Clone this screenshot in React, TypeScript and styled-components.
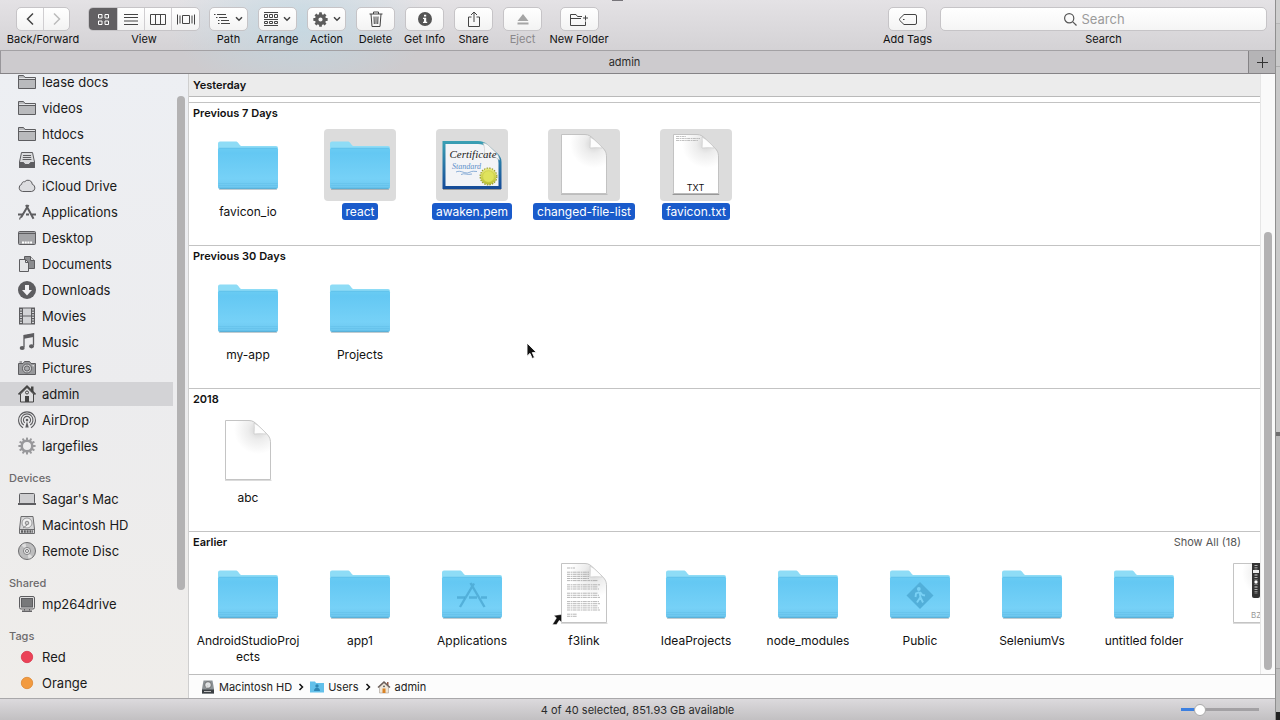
import React from "react";
import styled, { createGlobalStyle, css } from "styled-components";

const GlobalStyle = createGlobalStyle`
  * { box-sizing: border-box; }
  body {
    margin: 0;
    overflow: hidden;
    font-family: Inter, "Liberation Sans", sans-serif;
    font-size: 12px;
    color: #111;
  }
  button, input { font: inherit; color: inherit; margin: 0; }
  button { padding: 0; border: 0; background: none; }
  a { color: inherit; text-decoration: none; }
  svg { display: block; flex: none; }
`;

/* ---------- shell ---------- */

const Desktop = styled.div`
  display: flex;
  height: 100vh;
  padding-right: 4px;
  background: linear-gradient(#cfcfcf 0 23px, #b8b8b8 23px 24px, #c9c9c9 24px 66px, #adadad 66px 67px, #c9c9c9 67px 432px, #6f6f6f 432px 436px, #b9b9b9 436px 540px, #c4c4c4 540px 668px, #a5a5a5 668px 669px, #bdbdbd 669px 712px, #222 712px);
`;

const Window = styled.div`
  flex: 1;
  min-width: 0;
  display: flex;
  flex-direction: column;
  border-right: 1px solid #8f8f8f;
  background: #fff;
`;

const Chrome = styled.header`
  position: relative;
  background:
    radial-gradient(ellipse 130px 70px at 300px 24px, rgba(190, 216, 228, 0.75), rgba(190, 216, 228, 0)),
    linear-gradient(#e4e2e5, #d4d2d5 50px, #cdcbce 51px);
`;

const ProxyTail = styled.span`
  position: absolute;
  top: 0;
  left: 48%;
  width: 11px;
  height: 1px;
  background: #77757a;
`;

const Toolbar = styled.div`
  display: flex;
  height: 50px;
  padding: 7px 8px 0 7px;
`;

const Spacer = styled.div<{ $width?: number }>`
  ${(p) => (p.$width ? `flex: none; width: ${p.$width}px;` : "flex: 1;")}
`;

const Tool = styled.div<{ $width?: number }>`
  flex: none;
  width: ${(p) => p.$width ?? 49}px;
  display: flex;
  flex-direction: column;
  align-items: center;
  gap: 1px;
`;

const SearchTool = styled(Tool)`
  flex: 0 1 327px;
`;

const ToolLabel = styled.span<{ $dim?: boolean }>`
  font-size: 11px;
  line-height: 14px;
  white-space: nowrap;
  color: ${(p) => (p.$dim ? "#8a888b" : "#111")};
`;

const Segments = styled.div`
  display: flex;
  height: 24px;
  border: 1px solid #c6c4c7;
  border-radius: 5px;
  overflow: hidden;
  background: linear-gradient(#fff, #f3f3f3);
`;

const Segment = styled.button<{ $active?: boolean; $width: number }>`
  display: flex;
  align-items: center;
  justify-content: center;
  width: ${(p) => p.$width}px;
  color: ${(p) => (p.$active ? "#fff" : "#444")};
  background: ${(p) => (p.$active ? "#626063" : "none")};
  & + & { border-left: 1px solid #d0ced1; }
  &:disabled { color: #bbb; }
`;

const ToolButton = styled.button`
  display: flex;
  align-items: center;
  justify-content: center;
  gap: 5px;
  width: 39px;
  height: 24px;
  border: 1px solid #c6c4c7;
  border-radius: 5px;
  background: linear-gradient(#fff, #f3f3f3);
  color: #444;
  &:disabled { color: #a5a5a5; }
`;

const SearchBox = styled.label`
  display: flex;
  align-items: center;
  justify-content: center;
  gap: 5px;
  width: 100%;
  height: 24px;
  border: 1px solid #c6c4c7;
  border-radius: 5px;
  background: linear-gradient(#fff, #f5f5f5);
  color: #555;
`;

const SearchInput = styled.input`
  width: 62px;
  padding: 0;
  border: 0;
  outline: 0;
  background: none;
  font-size: 13px;
  &::placeholder { color: #9b9b9b; opacity: 1; }
`;

const TabBar = styled.div`
  display: flex;
  height: 24px;
  border-top: 1px solid #a3a1a4;
  border-bottom: 1px solid #858386;
`;

const Tab = styled.button`
  flex: 1;
  font-size: 11px;
  color: #2b2b2b;
  border-left: 1px solid #98969a;
`;

const NewTab = styled.button`
  display: flex;
  align-items: center;
  justify-content: center;
  width: 27px;
  border-left: 1px solid #858386;
  background: #b5b4b6;
  color: #333;
`;

const Body = styled.div`
  flex: 1;
  min-height: 0;
  display: flex;
`;

/* ---------- sidebar ---------- */

const Sidebar = styled.aside`
  flex: none;
  width: 189px;
  display: flex;
  overflow: hidden;
  border-right: 1px solid #cfcfcf;
  background: linear-gradient(#edeff3, #ececee 50%, #efedea);
`;

const Places = styled.nav`
  width: 173px;
  margin-top: -4px;
`;

const Place = styled.a<{ $active?: boolean }>`
  display: flex;
  align-items: center;
  gap: 6px;
  height: 24px;
  margin-bottom: 2px;
  padding-left: 18px;
  font-size: 13px;
  white-space: nowrap;
  color: #1a1a1a;
  ${(p) => p.$active && css`background: #d3d3d6;`}
`;

const PlaceHeading = styled.h2`
  margin: 0;
  padding: 11px 9px 2px;
  font-size: 11px;
  font-weight: 500;
  line-height: 14px;
  color: #6c6a6c;
`;

const SidebarTrack = styled.div`
  width: 15px;
  padding: 22px 3px 0 4px;
`;

const Thumb = styled.div<{ $height: number }>`
  height: ${(p) => p.$height}%;
  border-radius: 4px;
  background: #b3b2b3;
`;

/* ---------- main area ---------- */

const Main = styled.main`
  flex: 1;
  min-width: 0;
  display: flex;
  flex-direction: column;
`;

const Browser = styled.div`
  position: relative;
  flex: 1;
  min-height: 0;
  display: flex;
`;

const Groups = styled.div`
  flex: 1;
  min-width: 0;
  overflow: hidden;
`;

const MainTrack = styled.div`
  flex: none;
  width: 15px;
  padding: 158px 3px 0;
  border-left: 1px solid #e6e6e6;
  background: #fafafa;
`;

const groupTitle = css`
  margin: 0;
  font-size: 11px;
  font-weight: 600;
  line-height: 16px;
  color: #111;
`;

const StickyTitle = styled.h2`
  ${groupTitle}
  height: 23px;
  margin-bottom: 5px;
  padding: 3px 4px;
  border-bottom: 1px solid #b9b9b9;
  background: #ececec;
`;

const Group = styled.section`
  height: 143px;
  border-top: 1px solid #c3c3c3;
  overflow: hidden;
`;

const GroupHead = styled.div`
  display: flex;
  justify-content: space-between;
  padding: 2px 19px 8px 4px;
`;

const GroupTitle = styled.h2`
  ${groupTitle}
`;

const ShowAll = styled.button`
  font-size: 11px;
  line-height: 16px;
  color: #555;
`;

const Files = styled.div`
  display: flex;
  padding-left: 3px;
`;

const FileButton = styled.button`
  flex: none;
  width: 112px;
  display: flex;
  flex-direction: column;
  align-items: center;
  gap: 2px;
`;

const FileIcon = styled.span<{ $selected?: boolean }>`
  border-radius: 4px;
  background: ${(p) => (p.$selected ? "#dcdcdc" : "none")};
`;

const FileName = styled.span<{ $selected?: boolean }>`
  max-width: 112px;
  padding: 1px 4px 0;
  border-radius: 3px;
  line-height: 16px;
  word-break: break-all;
  color: ${(p) => (p.$selected ? "#fff" : "#111")};
  background: ${(p) => (p.$selected ? "#1a5bcb" : "none")};
`;

const Pointer = styled.svg`
  position: absolute;
  left: 337px;
  top: 268px;
`;

const PathBar = styled.nav`
  display: flex;
  align-items: center;
  gap: 5px;
  height: 24px;
  padding: 1px 12px 0;
  border-top: 1px solid #bdbdbd;
  background: #fcfcfc;
  font-size: 11px;
`;

const Crumb = styled.a`
  display: flex;
  align-items: center;
  gap: 4px;
  color: #222;
`;

const StatusBar = styled.footer`
  display: grid;
  grid-template-columns: 1fr auto 1fr;
  align-items: center;
  height: 22px;
  padding: 0 16px;
  border-top: 1px solid #a9a8aa;
  background: linear-gradient(#dcdadd, #c2c0c2);
  font-size: 11px;
  color: #2b2b2b;
`;

const StatusText = styled.span`
  grid-column: 2;
`;

const ZoomSlider = styled.input`
  justify-self: end;
  appearance: none;
  width: 78px;
  height: 12px;
  background: linear-gradient(90deg, #3b7fe0 25%, #a3a1a4 25%) center / 100% 3px no-repeat;
  &::-webkit-slider-thumb {
    appearance: none;
    width: 12px;
    height: 12px;
    border: 1px solid #aaa;
    border-radius: 50%;
    background: #fff;
  }
`;

/* ---------- toolbar drawings ---------- */

const Line = ({ w, h, d, sw = 1, children }: { w: number; h: number; d?: string; sw?: number; children?: React.ReactNode }) => (
  <svg width={w} height={h} viewBox={`0 0 ${w} ${h}`} fill="none" stroke="currentColor" strokeWidth={sw}>
    {d && <path d={d} />}
    {children}
  </svg>
);

const Caret = () => <Line w={8} h={6} sw={1.5} d="M1 1.2l3 3 3-3" />;

const Cog = ({ size, teeth, inner, color }: { size: number; teeth: number; inner: number; color: string }) => (
  <svg width={size} height={size} viewBox="-9 -9 18 18">
    {Array.from({ length: teeth }, (_, i) => (
      <rect key={i} x={teeth > 8 ? -1 : -1.7} y="-8.6" width={teeth > 8 ? 2 : 3.4} height="4" rx="0.5" fill={color} transform={`rotate(${(i * 360) / teeth})`} />
    ))}
    <circle r={(6.6 + inner) / 2} fill="none" stroke={color} strokeWidth={6.6 - inner} />
  </svg>
);

/* ---------- sidebar drawings ---------- */

const G = "#5d5d60";
const F = "#b9babd";

const placeArt: Record<string, React.ReactNode> = {
  folder: (
    <>
      <path d="M.5 15.500V2.500H5.500L7 4.500H17.500V15.500Z" fill={F} stroke={G} />
      <path d="M.5 6.500H17.500" stroke={G} />
      <path d="M1 5.500H17" stroke="#e4e5e8" />
    </>
  ),
  recents: (
    <>
      <path d="M3.500 1.500H14.500L16.500 11V16.500H1.500V11Z" fill="#d9dadc" stroke={G} />
      <path d="M1.500 11.500H5.500L7 13.500H11L12.500 11.500H16.500V16.500H1.500Z" fill={G} stroke={G} />
      <path d="M5 4.500H13M4.800 6.500H13.200M4.600 8.500H13.400" stroke={G} />
    </>
  ),
  cloud: <path d="M4.500 14.500a3.700 3.700 0 0 1-.8-7.200 2.500 2.500 0 0 1 3-2.600 4.300 4.300 0 0 1 7.600 2.600 3.700 3.700 0 0 1-.6 7.200Z" fill="#dcdde0" stroke={G} />,
  apps: (
    <g stroke={G} fill="none">
      <path d="M8 2L15.500 15.800M10.500 2L3 14.500" strokeWidth="2" />
      <path d="M0 11.500H5M8 11.500H11M14 11.500H18" strokeWidth="1.800" />
      <path d="M2.500 14L1.500 16.500" strokeWidth="1.200" />
    </g>
  ),
  desktop: (
    <>
      <rect x=".5" y="2.500" width="17" height="13" rx="1" fill="#a3a4a7" stroke={G} />
      <path d="M1 4.500H17" stroke={G} />
      <path d="M4 13.500H14" stroke="#fff" strokeWidth="2" strokeDasharray="2 .7" />
    </>
  ),
  documents: (
    <>
      <path d="M6.500 1.500H12.500L16.500 5.500V13.500H6.500Z" fill="#8b8c8f" stroke={G} />
      <path d="M12.500 1.500V5.500H16.500" fill="#d9dadc" stroke={G} />
      <path d="M1.500 4.500H7.500L10.500 7.500V16.500H1.500Z" fill="#e3e4e6" stroke={G} />
      <path d="M7.500 4.500V7.500H10.500" fill="none" stroke={G} />
    </>
  ),
  downloads: (
    <>
      <circle cx="9" cy="9" r="9" fill={G} />
      <path d="M7 4H11V9H14L9 14.500L4 9H7Z" fill="#f2f2f4" />
    </>
  ),
  movies: (
    <>
      <rect x="1.500" y="1" width="15" height="16" fill="#d3d4d7" stroke={G} />
      <path d="M4.500 1V17M13.500 1V17M4.500 9H13.500" stroke={G} />
      <path d="M3 1V17M15 1V17" stroke={G} strokeWidth="2" strokeDasharray="1.300 1.200" />
    </>
  ),
  music: (
    <>
      <path d="M6 14V2.500L15.500.8V12.500" fill="none" stroke={G} strokeWidth="1.300" />
      <path d="M6 2.500L15.500.8V4L6 5.700Z" fill={G} />
      <ellipse cx="4.200" cy="15" rx="2.500" ry="2.100" fill={G} />
      <ellipse cx="13.500" cy="13.300" rx="2.500" ry="2.100" fill={G} />
    </>
  ),
  pictures: (
    <>
      <path d="M.5 4.500H5L6.500 2.500H11.500L13 4.500H17.500V15.500H.5Z" fill="#98999c" stroke={G} />
      <path d="M1.500 3H4" stroke={G} />
      <circle cx="9" cy="9.500" r="4.500" fill="#d5d6d8" stroke={G} />
      <circle cx="9" cy="9.500" r="2.600" fill="#a9aaad" stroke={G} />
      <circle cx="15.200" cy="6.800" r=".8" fill="#eee" />
    </>
  ),
  home: (
    <>
      <path d="M13 1.500H15.500V7H13Z" fill="#444" />
      <path d="M2.500 9L9 2.500L15.500 9V17H2.500Z" fill="#dcdcde" stroke="#444" />
      <path d="M.5 9.500L9 1.300L17.500 9.500" fill="none" stroke="#444" strokeWidth="1.700" />
      <rect x="7" y="11" width="4" height="6" fill="#444" />
      <circle cx="9" cy="7.500" r="1.500" fill="none" stroke="#444" />
    </>
  ),
  airdrop: (
    <g fill="none" stroke={G} strokeWidth="1.100">
      <path d="M5 16.700A8.400 8.400 0 1 1 13 16.700" />
      <path d="M5.800 14A6 6 0 1 1 12.200 14" />
      <path d="M6.800 11.800A3.600 3.600 0 1 1 11.200 11.800" />
      <circle cx="9" cy="9" r="1.300" fill={G} stroke="none" />
      <path d="M9 10L7.300 16.500H10.700Z" fill={G} stroke="none" />
    </g>
  ),
  laptop: (
    <>
      <rect x="1.500" y="3.500" width="15" height="10" rx="1" fill="#cfcfd1" stroke={G} />
      <path d="M0 14H18" stroke={G} strokeWidth="2" />
    </>
  ),
  disk: (
    <>
      <path d="M3 .500H15L16.500 13V17.500H1.500V13Z" fill="#d6d6d7" stroke="#6c6c6e" />
      <circle cx="9" cy="7" r="5" fill="#f0f0f0" stroke="#99999b" />
      <circle cx="9" cy="7" r="1.800" fill="#ccc" stroke="#88888a" />
      <path d="M9 9L5 12" stroke="#88888a" />
      <path d="M1.500 13.500H16.500" stroke="#6c6c6e" />
      <path d="M3 15.500H15" stroke="#5d5d5f" strokeWidth="2.500" strokeDasharray="2 .8" />
    </>
  ),
  disc: (
    <>
      <circle cx="9" cy="9" r="8.500" fill="#bdbdbe" stroke="#6c6c6e" />
      <path d="M9 9L3.500 3.200A8 8 0 0 1 7.500 1.200ZM9 9L14.500 14.800A8 8 0 0 1 10.500 16.800Z" fill="#dedede" />
      <circle cx="9" cy="9" r="3.600" fill="#e4e4e4" stroke="#88888a" />
      <circle cx="9" cy="9" r="1.500" fill="#fff" stroke="#77777a" />
    </>
  ),
  display: (
    <>
      <rect x="1.500" y="1.500" width="15" height="12.500" rx="1.500" fill="#e1e0e0" stroke={G} />
      <rect x="3.500" y="3.500" width="11" height="8.500" fill="#77787a" stroke={G} />
      <path d="M6.500 14V15.500M11.500 14V15.500" stroke={G} />
      <path d="M4 16.200H14" stroke={G} strokeWidth="1.500" />
    </>
  ),
  red: <circle cx="9" cy="9" r="5.700" fill="#eb4257" stroke="#d9334a" strokeWidth=".8" />,
  orange: <circle cx="9" cy="9" r="5.700" fill="#f29a3f" stroke="#dd8730" strokeWidth=".8" />,
};

const PlaceIcon = ({ kind }: { kind: string }) =>
  kind === "gear" ? (
    <Cog size={18} teeth={12} inner={4} color="#98989b" />
  ) : (
    <svg width="18" height="18" viewBox="0 0 18 18">{placeArt[kind]}</svg>
  );

/* ---------- file drawings ---------- */

const HiddenSvg = styled.svg`
  position: absolute;
  width: 0;
  height: 0;
`;

const Defs = () => (
  <HiddenSvg aria-hidden="true">
    <defs>
      <linearGradient id="front" x1="0" y1="0" x2="0" y2="1">
        <stop offset="0" stopColor="#6accf3" />
        <stop offset=".12" stopColor="#64c8f3" />
        <stop offset=".75" stopColor="#76d1f7" />
        <stop offset="1" stopColor="#6cc6ee" />
      </linearGradient>
      <linearGradient id="cert" x1="0" y1="0" x2="0" y2="1">
        <stop offset="0" stopColor="#3aa0b4" />
        <stop offset="1" stopColor="#164a97" />
      </linearGradient>
      <radialGradient id="paper" gradientUnits="userSpaceOnUse" cx="46" cy="15" r="24">
        <stop offset="0" stopColor="#d2d2d2" />
        <stop offset=".4" stopColor="#ececec" />
        <stop offset="1" stopColor="#fff" />
      </radialGradient>
      <linearGradient id="seal" x1="0" y1="0" x2="0" y2="1">
        <stop offset="0" stopColor="#e8e878" />
        <stop offset="1" stopColor="#b9bf2f" />
      </linearGradient>
    </defs>
  </HiddenSvg>
);

const FolderArt = ({ badge }: { badge?: "apps" | "public" }) => (
  <svg width="72" height="72" viewBox="0 0 72 72">
    <path d="M7 60.300H65" stroke="#000" strokeOpacity=".22" strokeWidth="1" />
    <path d="M6 14.500a2 2 0 0 1 2-2H23.500c1.500 0 2.200.5 3 1.800l1.300 1.700c.6.8 1.200 1 2.300 1H64a2 2 0 0 1 2 2V57H6Z" fill="#8edcf6" />
    <path d="M6 20.500a1.500 1.500 0 0 1 1.500-1.500h57a1.500 1.500 0 0 1 1.500 1.500V58a2 2 0 0 1-2 2H8a2 2 0 0 1-2-2Z" fill="url(#front)" />
    <path d="M7 19.200H65" stroke="#5dbde7" strokeWidth=".7" />
    <path d="M6.500 54.500H65.500M6.500 56.500H65.500M6.500 58.500H65.500" stroke="#5ab7e2" strokeOpacity=".5" strokeWidth=".7" />
    <path d="M7.500 59.700H64.500" stroke="#4f9fc6" strokeWidth=".7" />
    {badge === "apps" && (
      <g stroke="#4aa5d0" strokeOpacity=".75" fill="none">
        <path d="M34.500 25L48.500 49M38 25.500L24 49" strokeWidth="2.400" />
        <path d="M21 39.500H29M33 39.500H41M45 39.500H51" strokeWidth="2.400" />
      </g>
    )}
    {badge === "public" && (
      <>
        <path d="M36 24L49.500 37.500L36 51L22.500 37.500Z" fill="#52afd9" />
        <circle cx="34.800" cy="31" r="1.900" fill="#79d1f5" />
        <path d="M35.500 34L36.500 39.500L39 44.500M36.500 39L33 44.500M35.500 34L32 35.500L31.500 39M36 34L38.500 37L41 37.500" stroke="#79d1f5" strokeWidth="1.900" fill="none" />
      </>
    )}
  </svg>
);

const PageShape = () => (
  <>
    <path d="M13 65.300H59.500" stroke="#000" strokeOpacity=".18" />
    <path d="M13.500 5.500H37C41 5.500 43 7.500 46 10.500L53 17C57 21 58.500 23 58.500 28V64.500H13.500Z" fill="url(#paper)" stroke="#bdbdbd" strokeWidth=".9" />
    <path d="M42 8C42.500 11 42.300 15 42 19C46 18.600 50 18.600 54.500 19L52 16L46 10.500Z" fill="#fdfdfd" stroke="#c4c4c4" strokeWidth=".6" />
  </>
);

const textRows = Array.from({ length: 24 }, (_, i) => i).filter((i) => ![1, 7, 11, 15, 21].includes(i));

const PageArt = ({ kind }: { kind: "blank" | "txt" | "alias" | "archive" }) => (
  <svg width="72" height="72" viewBox="0 0 72 72">
    <PageShape />
    {kind === "txt" && (
      <>
        <path d="M16 7.500H26M16 9.500H40M16 11.500H38" stroke="#999" strokeWidth=".6" strokeDasharray="3 .6 1.500 .5" />
        <path d="M12.500 65.400H59" stroke="#777" strokeWidth=".6" />
        <text x="35.500" y="62" textAnchor="middle" fontFamily="Inter, sans-serif" fontSize="9" fill="#111">TXT</text>
      </>
    )}
    {kind === "alias" && (
      <>
        {textRows.map((i) => (
          <path key={i} d={`M19 ${10 + i * 2.1}H${i < 2 ? 27 : i > 21 ? 29 : i < 6 ? 41 : 50 + (i % 3)}`} stroke="#999" strokeWidth=".7" strokeDasharray="3 .6 1.500 .5 4 .6" />
        ))}
        <path d="M6 57.500L13.500 56.500V64L11.300 62.300L8.500 66.500H4.500L8.500 60Z" fill="#111" stroke="#fff" strokeWidth=".4" />
      </>
    )}
    {kind === "archive" && (
      <>
        <path d="M32 5H40V38a2 2 0 0 1-2 2H34a2 2 0 0 1-2-2Z" fill="#333" />
        <path d="M36 7V36" stroke="#ddd" strokeWidth="3" strokeDasharray=".8 1.600" />
        <rect x="33" y="12" width="6" height="3" fill="#eee" />
        <circle cx="36" cy="24" r="2.200" fill="#fff" stroke="#333" />
        <text x="31" y="60" fontFamily="Inter, sans-serif" fontSize="8" fill="#999">BZ2</text>
      </>
    )}
  </svg>
);

const CertArt = () => (
  <svg width="72" height="72" viewBox="0 0 72 72">
    <path d="M7 60.500H65" stroke="#000" strokeOpacity=".3" />
    <path d="M6.500 12H42C46 12 49 13 52 16L61 24C64 27 65.500 29 65.500 33V60H6.500Z" fill="url(#cert)" />
    <path d="M9.500 15H42C46 15 48 16 51 18.500L58 25C61 28 62.500 30 62.500 34V57H9.500Z" fill="#f3f4f7" />
    <path d="M47 14C49 18 48.500 21 48.500 26C54 26 59 27.500 63.500 31C63 28.500 62.500 26 60 23.500L52 16C50.500 14.700 49 14 47 14Z" fill="#f6f6f6" stroke="#c5c5c5" strokeWidth=".6" />
    <text x="13.500" y="29" fontFamily="'Liberation Serif', serif" fontStyle="italic" fontSize="11" fill="#222">Certificate</text>
    <text x="16" y="40" fontFamily="'Liberation Serif', serif" fontStyle="italic" fontSize="8" fill="#5d8fc9">Standard</text>
    <path d="M20 43C25 40.500 29 45.500 33 43.500S38 42.500 41 42.500M25 45.500C29 43.500 31 46.500 36 45" stroke="#5d8fc9" strokeWidth=".7" fill="none" />
    <circle cx="52.500" cy="47.500" r="8.200" fill="none" stroke="#9a9e2c" strokeWidth="1.500" strokeDasharray="1.600 1" />
    <circle cx="52.500" cy="47.500" r="7.900" fill="url(#seal)" />
    <circle cx="52.500" cy="47.500" r="5.800" fill="#dfe35c" stroke="#c6ca48" strokeWidth=".6" />
  </svg>
);

type Art = "folder" | "folder-apps" | "folder-public" | "cert" | "blank" | "txt" | "alias" | "archive";

const FileArt = ({ art }: { art: Art }) => {
  if (art === "cert") return <CertArt />;
  if (art === "folder") return <FolderArt />;
  if (art === "folder-apps") return <FolderArt badge="apps" />;
  if (art === "folder-public") return <FolderArt badge="public" />;
  return <PageArt kind={art} />;
};

/* ---------- data ---------- */

const places: { heading?: string; items: [string, string][] }[] = [
  {
    items: [
      ["folder", "lease docs"], ["folder", "videos"], ["folder", "htdocs"], ["recents", "Recents"],
      ["cloud", "iCloud Drive"], ["apps", "Applications"], ["desktop", "Desktop"], ["documents", "Documents"],
      ["downloads", "Downloads"], ["movies", "Movies"], ["music", "Music"], ["pictures", "Pictures"],
      ["home", "admin"], ["airdrop", "AirDrop"], ["gear", "largefiles"],
    ],
  },
  { heading: "Devices", items: [["laptop", "Sagar's Mac"], ["disk", "Macintosh HD"], ["disc", "Remote Disc"]] },
  { heading: "Shared", items: [["display", "mp264drive"]] },
  { heading: "Tags", items: [["red", "Red"], ["orange", "Orange"]] },
];

type FileEntry = { name: string; art: Art; selected?: boolean };

const groups: { title: string; more?: string; files: FileEntry[] }[] = [
  {
    title: "Previous 7 Days",
    files: [
      { name: "favicon_io", art: "folder" },
      { name: "react", art: "folder", selected: true },
      { name: "awaken.pem", art: "cert", selected: true },
      { name: "changed-file-list", art: "blank", selected: true },
      { name: "favicon.txt", art: "txt", selected: true },
    ],
  },
  { title: "Previous 30 Days", files: [{ name: "my-app", art: "folder" }, { name: "Projects", art: "folder" }] },
  { title: "2018", files: [{ name: "abc", art: "blank" }] },
  {
    title: "Earlier",
    more: "Show All (18)",
    files: [
      { name: "AndroidStudioProjects", art: "folder" },
      { name: "app1", art: "folder" },
      { name: "Applications", art: "folder-apps" },
      { name: "f3link", art: "alias" },
      { name: "IdeaProjects", art: "folder" },
      { name: "node_modules", art: "folder" },
      { name: "Public", art: "folder-public" },
      { name: "SeleniumVs", art: "folder" },
      { name: "untitled folder", art: "folder" },
      { name: "", art: "archive" },
    ],
  },
];

const tools: { label: string; icon: React.ReactNode; disabled?: boolean }[] = [
  {
    label: "Path",
    icon: (
      <>
        <Line w={16} h={12} d="M3 1.500H12M5 4.500H13M7 7.500H15M7 10.500H16M0 1.500H1.500M2 4.500H3.500M4 7.500H5.500M4 10.500H5.500" />
        <Caret />
      </>
    ),
  },
  {
    label: "Arrange",
    icon: (
      <>
        <Line w={14} h={14} d="M0 .500H14M0 7.500H14M0 13.500H14M.5 2.500H3.500V5.500H.5ZM5.500 2.500H8.500V5.500H5.500ZM10.500 2.500H13.500V5.500H10.500ZM.5 9.500H3.500V11.500H.5ZM5.500 9.500H8.500V11.500H5.500ZM10.500 9.500H13.500V11.500H10.500Z" />
        <Caret />
      </>
    ),
  },
  { label: "Action", icon: <><Cog size={15} teeth={8} inner={2.5} color="#5c5c5c" /><Caret /></> },
  { label: "Delete", icon: <Line w={14} h={16} d="M.5 3H13.500M4.500 3V1H9.500V3M2 3L3 15.500H11L12 3M5 5.500L5.300 13M7 5.500V13M9 5.500L8.700 13" /> },
  {
    label: "Get Info",
    icon: (
      <svg width="14" height="14" viewBox="0 0 14 14">
        <circle cx="7" cy="7" r="7" fill="#555" />
        <path d="M6 2.800H8.200V4.600H6ZM5 5.800H8.200V9.800H9.200V11H5V9.800H6V7H5Z" fill="#fff" />
      </svg>
    ),
  },
  { label: "Share", icon: <Line w={12} h={16} d="M3.500 6H.5V15.500H11.500V6H8.500M6 11V1.500M3 4L6 1L9 4" /> },
  {
    label: "Eject",
    disabled: true,
    icon: (
      <svg width="12" height="11" viewBox="0 0 12 11" fill="currentColor"><path d="M6 0L11.500 7H.5ZM.5 8.500H11.500V10.500H.5Z" /></svg>
    ),
  },
];

const folderPlus = <Line w={18} h={13} d="M12 3.500H7.500L6 1.500H.5V12.500H15.500V8.500M.5 5.500H11M15.500 2.500V7.500M13 5H18" />;

/* ---------- view ---------- */

export default function App() {
  return (
    <Desktop>
      <GlobalStyle />
      <Defs />
      <Window>
        <Chrome>
          <ProxyTail />
          <Toolbar>
            <Tool $width={72}>
              <Segments>
                <Segment $width={26} aria-label="Back"><Line w={8} h={14} sw={1.5} d="M7 1.500L1.500 7L7 12.500" /></Segment>
                <Segment $width={26} aria-label="Forward" disabled><Line w={8} h={14} sw={1.5} d="M1 1.500L6.500 7L1 12.500" /></Segment>
              </Segments>
              <ToolLabel>Back/Forward</ToolLabel>
            </Tool>
            <Spacer $width={9} />
            <Tool $width={112}>
              <Segments>
                <Segment $width={28} $active aria-label="Icons">
                  <Line w={11} h={11} d="M.5.500H4V4H.5ZM7 .500H10.500V4H7ZM.5 7H4V10.500H.5ZM7 7H10.500V10.500H7Z" />
                </Segment>
                <Segment $width={27} aria-label="List"><Line w={14} h={11} d="M0 .500H14M0 3.500H14M0 7H14M0 10.500H14" /></Segment>
                <Segment $width={27} aria-label="Columns"><Line w={16} h={11} d="M.5.500H15.500V10.500H.5ZM5.500.500V10.500M10.500.500V10.500" /></Segment>
                <Segment $width={28} aria-label="Gallery"><Line w={18} h={11} d="M.5.500V10.500M3 1.500V9.500M5.500 1.500H12.500V9.500H5.500ZM15 1.500V9.500M17.500.500V10.500" /></Segment>
              </Segments>
              <ToolLabel>View</ToolLabel>
            </Tool>
            <Spacer $width={4} />
            {tools.map((t) => (
              <Tool key={t.label}>
                <ToolButton aria-label={t.label} disabled={t.disabled}>{t.icon}</ToolButton>
                <ToolLabel $dim={t.disabled}>{t.label}</ToolLabel>
              </Tool>
            ))}
            <Tool $width={64}>
              <ToolButton aria-label="New Folder">{folderPlus}</ToolButton>
              <ToolLabel>New Folder</ToolLabel>
            </Tool>
            <Spacer />
            <Tool>
              <ToolButton aria-label="Add Tags">
                <Line w={18} h={11} d="M5 .500H16Q17.500.500 17.500 2V9Q17.500 10.500 16 10.500H5L.8 6.500Q0 5.500.8 4.500ZM4 5.500H5.500" />
              </ToolButton>
              <ToolLabel>Add Tags</ToolLabel>
            </Tool>
            <Spacer $width={8} />
            <SearchTool>
              <SearchBox>
                <Line w={13} h={13} sw={1.2} d="M8.800 8.800L12.500 12.500"><circle cx="5.200" cy="5.200" r="4.600" /></Line>
                <SearchInput type="text" placeholder="Search" aria-label="Search" />
              </SearchBox>
              <ToolLabel>Search</ToolLabel>
            </SearchTool>
          </Toolbar>
          <TabBar>
            <Tab>admin</Tab>
            <NewTab aria-label="New tab"><Line w={11} h={11} d="M5.500 0V11M0 5.500H11" /></NewTab>
          </TabBar>
        </Chrome>

        <Body>
          <Sidebar>
            <Places>
              {places.map((section, i) => (
                <React.Fragment key={i}>
                  {section.heading && <PlaceHeading>{section.heading}</PlaceHeading>}
                  {section.items.map(([kind, name]) => (
                    <Place key={name} href="#" $active={name === "admin"}>
                      <PlaceIcon kind={kind} />
                      {name}
                    </Place>
                  ))}
                </React.Fragment>
              ))}
            </Places>
            <SidebarTrack><Thumb $height={82} /></SidebarTrack>
          </Sidebar>

          <Main>
            <Browser>
              <Groups>
                <StickyTitle>Yesterday</StickyTitle>
                {groups.map((g) => (
                  <Group key={g.title}>
                    <GroupHead>
                      <GroupTitle>{g.title}</GroupTitle>
                      {g.more && <ShowAll>{g.more}</ShowAll>}
                    </GroupHead>
                    <Files>
                      {g.files.map((f) => (
                        <FileButton key={f.name} aria-label={f.name || "Archive"}>
                          <FileIcon $selected={f.selected}><FileArt art={f.art} /></FileIcon>
                          {f.name && <FileName $selected={f.selected}>{f.name}</FileName>}
                        </FileButton>
                      ))}
                    </Files>
                  </Group>
                ))}
              </Groups>
              <MainTrack><Thumb $height={99} /></MainTrack>
              <Pointer width="12" height="18" viewBox="0 0 12 18">
                <path d="M1 1V14.200L4 11.400L6.200 16.500L8.500 15.500L6.300 10.600H10.500Z" fill="#111" stroke="#fff" strokeWidth=".9" />
              </Pointer>
            </Browser>
            <PathBar>
              <Crumb href="#">
                <svg width="14" height="14" viewBox="0 0 14 14">
                  <path d="M2.500.500H11.500L13 9V13.500H1V9Z" fill="#8c9296" />
                  <path d="M1 9.500H13V13.500H1Z" fill="#3c4044" />
                  <circle cx="7" cy="5" r="3.300" fill="#dfe2e4" stroke="#555" strokeWidth=".7" />
                  <path d="M7 5L5 8M3 11.500H10" stroke="#ccc" strokeWidth=".9" />
                </svg>
                Macintosh HD
              </Crumb>
              <Line w={8} h={8} sw={1.5} d="M2.500 1L5.500 4L2.500 7" />
              <Crumb href="#">
                <svg width="14" height="14" viewBox="0 0 14 14">
                  <path d="M0 1.500H5L6 3H14V12.500H0Z" fill="#62c0ea" />
                  <circle cx="7" cy="6" r="1.700" fill="#2f86b4" />
                  <path d="M4 11C4 8.500 5.500 8 7 8S10 8.500 10 11Z" fill="#2f86b4" />
                </svg>
                Users
              </Crumb>
              <Line w={8} h={8} sw={1.5} d="M2.500 1L5.500 4L2.500 7" />
              <Crumb href="#">
                <svg width="14" height="14" viewBox="0 0 14 14">
                  <path d="M2.500 7L7 3L11.500 7V13H2.500Z" fill="#efe6d8" stroke="#a8a097" strokeWidth=".6" />
                  <path d="M10 2H11.500V5H10Z" fill="#9a5b45" />
                  <path d="M1 7.500L7 2L13 7.500" fill="none" stroke="#6b5f5a" strokeWidth="1.500" />
                  <rect x="5.500" y="8.500" width="3" height="4.500" fill="#d98224" />
                  <circle cx="7" cy="6.300" r=".9" fill="#555" />
                </svg>
                admin
              </Crumb>
            </PathBar>
          </Main>
        </Body>

        <StatusBar>
          <StatusText>4 of 40 selected, 851.93 GB available</StatusText>
          <ZoomSlider type="range" min="0" max="100" defaultValue="20" aria-label="Icon size" />
        </StatusBar>
      </Window>
    </Desktop>
  );
}
